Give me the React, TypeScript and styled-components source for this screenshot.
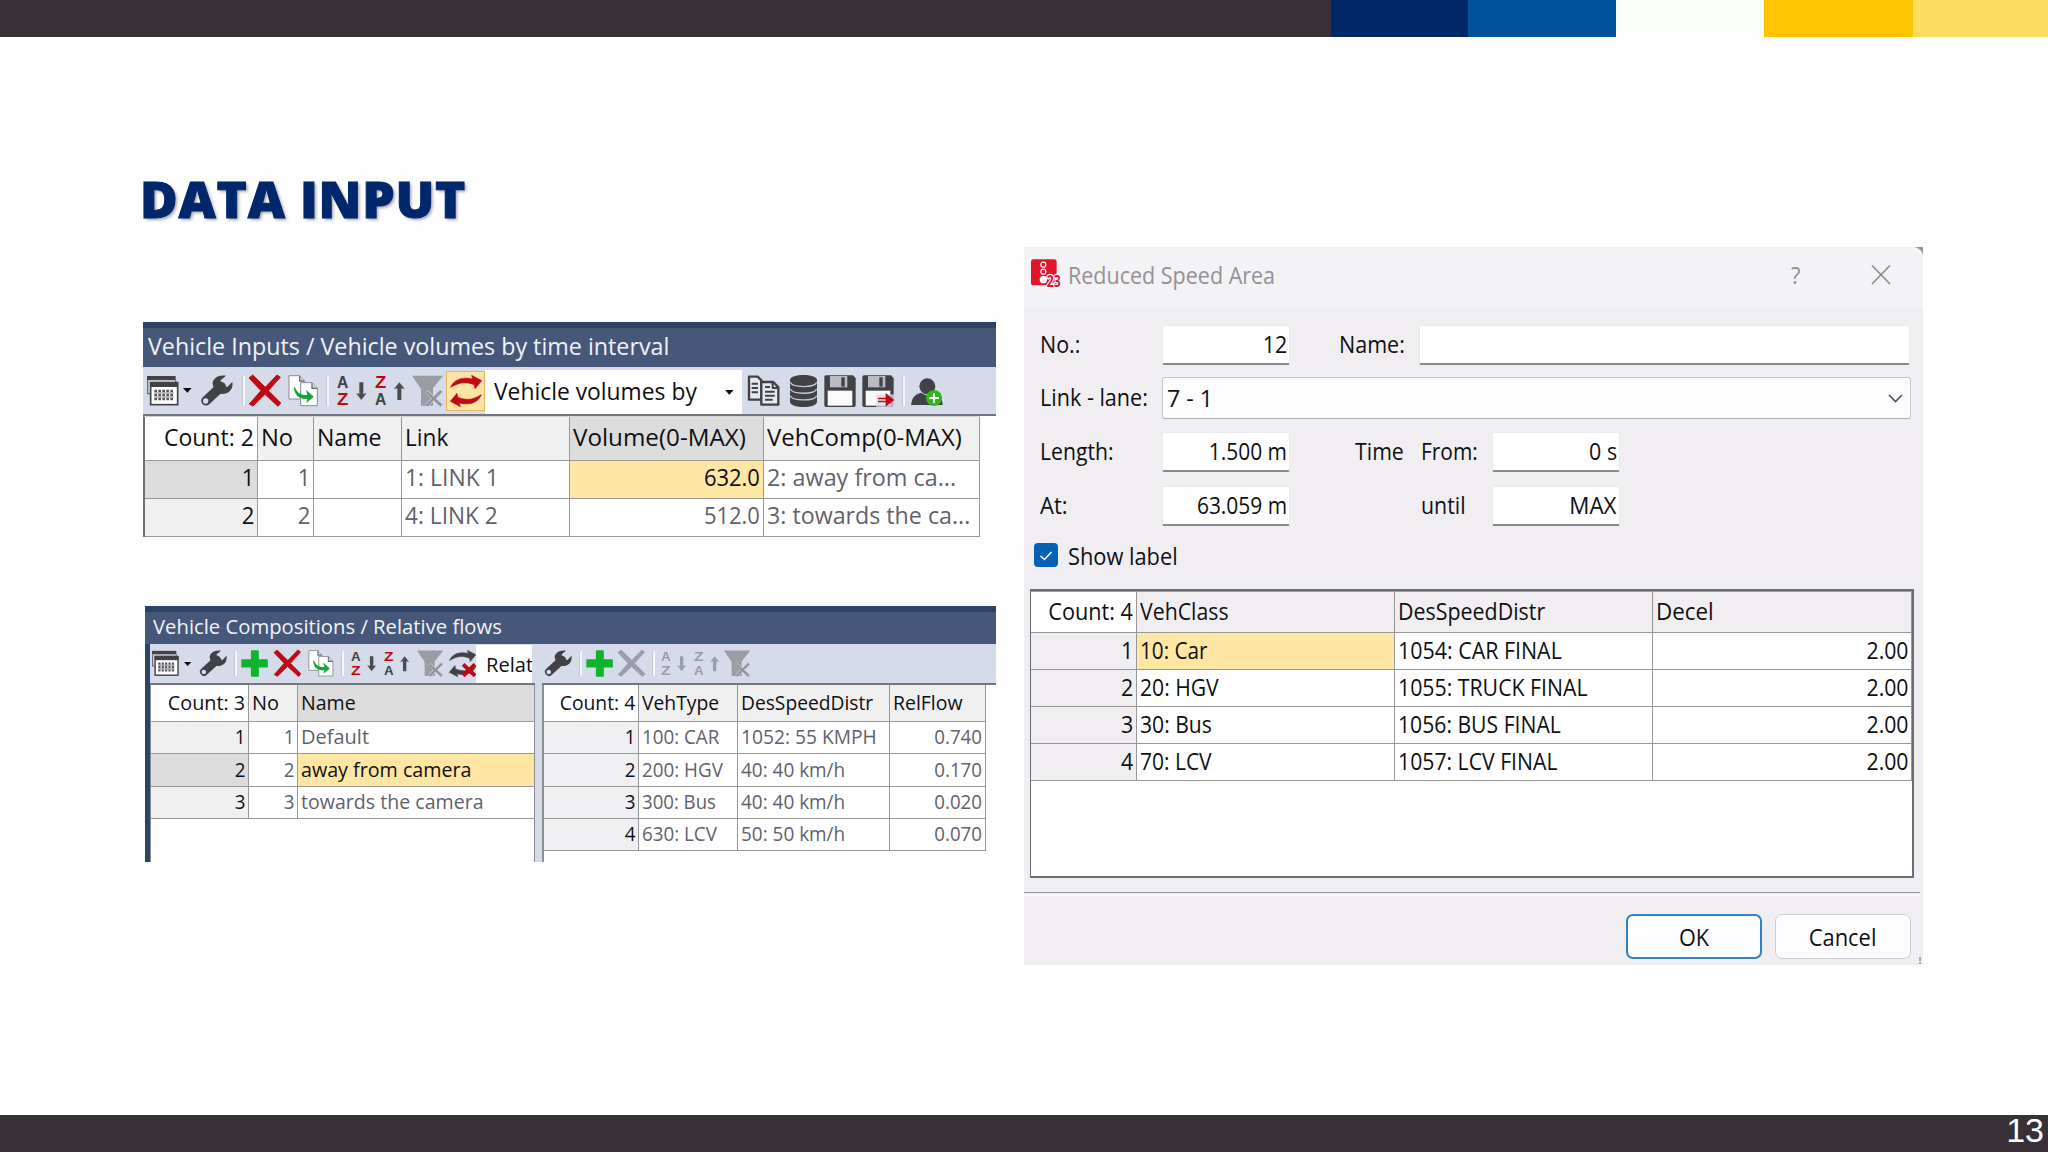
import React from "react";
import styled, { createGlobalStyle } from "styled-components";

const Global = createGlobalStyle`
  * { box-sizing: border-box; }
  body { margin: 0; background: #fefefe; font-family: "Open Sans", "Noto Sans", sans-serif; }
`;

/* ---------- slide frame ---------- */

const Slide = styled.div`
  width: 2048px;
  height: 1152px;
  display: flex;
  flex-direction: column;
  overflow: hidden;
  background: #fefefe;
`;

const TopBar = styled.header`
  display: flex;
  height: 37px;
  flex: none;
`;

const Stripe = styled.div<{ $w: number; $c: string }>`
  width: ${(p) => p.$w}px;
  background: ${(p) => p.$c};
`;

const Body = styled.main`
  display: flex;
  flex: 1;
  padding-left: 143px;
`;

const LeftColumn = styled.div`
  width: 853px;
  padding-top: 137px;
  display: flex;
  flex-direction: column;
`;

const Heading = styled.h1`
  margin: 0 0 98px -3px;
  height: 50px;
  font-size: 50px;
  line-height: 50px;
  font-weight: 800;
  letter-spacing: 0.8px;
  white-space: nowrap;
  color: #00276c;
  -webkit-text-stroke: 1px #00276c;
  text-shadow: 2px 2px 3px rgba(60, 60, 70, 0.45);
  transform: scaleX(1.026);
  transform-origin: left;
`;

const Footer = styled.footer`
  height: 37px;
  flex: none;
  display: flex;
  justify-content: flex-end;
  padding: 0 4px 0 0;
  background: linear-gradient(#353235, #3b2e38);
  color: #fff;
  font: 34px/30px "Liberation Sans", Arial, sans-serif;
`;

/* ---------- shared text and tables ---------- */

const Txt = styled.span<{ $k?: number; $end?: boolean; $mid?: boolean }>`
  display: inline-block;
  line-height: 1;
  white-space: nowrap;
  transform: scaleX(${(p) => p.$k ?? 1});
  transform-origin: ${(p) => (p.$end ? "right" : p.$mid ? "center" : "left")};
`;

const TableRow = styled.div<{ $cols: string; $h: number; $pb: number }>`
  display: grid;
  grid-template-columns: ${(p) => p.$cols};
  height: ${(p) => p.$h}px;
  & > div { padding-bottom: ${(p) => p.$pb}px; }
`;

const Cell = styled.div<{ $bg?: string; $c?: string; $end?: boolean; $open?: boolean }>`
  display: flex;
  align-items: center;
  justify-content: ${(p) => (p.$end ? "flex-end" : "flex-start")};
  overflow: hidden;
  padding: 0 3px;
  background: ${(p) => p.$bg ?? "#fff"};
  color: ${(p) => p.$c ?? "#101014"};
  border-right: ${(p) => (p.$open ? "0" : "1px solid #989898")};
  border-bottom: 1px solid #989898;
`;

type CellSpec = { t: string; k?: number; bg?: string; c?: string; end?: boolean; open?: boolean };

function Row({ cols, h, pb, cells }: { cols: string; h: number; pb: number; cells: CellSpec[] }) {
  return (
    <TableRow $cols={cols} $h={h} $pb={pb}>
      {cells.map((c, i) => (
        <Cell key={i} $bg={c.bg} $c={c.c} $end={c.end} $open={c.open}>
          <Txt $k={c.k} $end={c.end}>{c.t}</Txt>
        </Cell>
      ))}
    </TableRow>
  );
}

const HEAD = "#f0f0f0";
const SELHEAD = "#dcdcdc";
const YEL = "#ffe6a2";
const DIM = "#62626a";

/* ---------- toolbar ---------- */

const Toolbar = styled.div<{ $h: number }>`
  display: flex;
  align-items: center;
  height: ${(p) => p.$h}px;
  background: #d6dbe9;
  border-bottom: 2px solid #73767e;
`;

const Svg = styled.svg<{ $ml: number }>`
  flex: none;
  display: block;
  margin-left: ${(p) => p.$ml}px;
  overflow: visible;
`;

const Sep = styled.i<{ $ml: number; $h: number }>`
  flex: none;
  width: 2px;
  height: ${(p) => p.$h}px;
  margin-left: ${(p) => p.$ml}px;
  background: #f7f7fb;
  box-shadow: -1px 0 0 #c3c7d4;
`;

const Toggle = styled.div`
  flex: none;
  width: 39px;
  height: 40px;
  margin-left: 2px;
  display: flex;
  align-items: center;
  justify-content: center;
  background: #fde3a4;
  border: 1.5px solid #e6b85c;
`;

const Picker = styled.div<{ $w: number; $h: number; $pl: number; $fs: number }>`
  flex: none;
  display: flex;
  align-items: center;
  align-self: flex-end;
  overflow: hidden;
  width: ${(p) => p.$w}px;
  height: ${(p) => p.$h}px;
  padding-left: ${(p) => p.$pl}px;
  background: #fff;
  color: #101014;
  font-size: ${(p) => p.$fs}px;
`;

type IP = { s: number; ml?: number; tone?: string };
const DK = "#404246";
const RED = "#c00914";

const TableIcon = ({ s, ml = 0 }: IP) => (
  <Svg $ml={ml} width={s * 94} height={s * 96} viewBox="50 196 94 96">
    <rect x="50" y="199" width="86" height="13" fill={DK} />
    <path d="M52 212V252H60M136 212V218" stroke="#6b6d70" strokeWidth="4" fill="none" />
    <rect x="54" y="212" width="80" height="6" fill="#c9cbd0" />
    <rect x="61" y="219" width="81" height="66" fill="#fff" stroke={DK} strokeWidth="5" />
    <rect x="60" y="217" width="83" height="15" fill={DK} />
    <path d="M72 244H132M72 256H132M72 268H132" stroke="#55575b" strokeWidth="8" strokeDasharray="8 4" />
    <path d="M72 250H130M72 262H130" stroke="#8a8c90" strokeWidth="3" />
  </Svg>
);

const Caret = ({ s, ml = 0 }: IP) => (
  <Svg $ml={ml} width={s * 26} height={s * 14} viewBox="0 0 26 14">
    <path d="M0 0H26L13 14Z" fill="#0c0c10" />
  </Svg>
);

const Wrench = ({ s, ml = 0 }: IP) => (
  <Svg $ml={ml} width={s * 98} height={s * 96} viewBox="211 195 98 96">
    <path d="M229 272L274 230" stroke={DK} strokeWidth="29" strokeLinecap="round" />
    <path d="M250 226C244 210 262 193 289 197L273 211L277 228L294 230L308 215C312 238 297 252 276 252C262 252 254 242 250 226Z" fill={DK} />
    <circle cx="228" cy="273" r="8" fill="#d6dbe9" />
  </Svg>
);

const Cross = ({ s, ml = 0, tone = RED }: IP) => (
  <Svg $ml={ml} width={s * 96} height={s * 94} viewBox="357 196 96 94">
    <path d="M357 205L368 196L406 233L441 196L451 203L415 243L452 280L444 290L405 254L369 289L358 283L393 243Z" fill={tone} stroke={tone} strokeWidth="3" />
  </Svg>
);

const Plus = ({ s, ml = 0 }: IP) => (
  <Svg $ml={ml} width={s * 96} height={s * 96} viewBox="0 0 96 96">
    <path d="M35 3Q35 1 38 1H60Q63 1 63 4V33H92Q95 33 95 36V59Q95 62 92 62H63V92Q63 95 60 95H38Q35 95 35 92V62H4Q1 62 1 59V36Q1 33 4 33H35Z" fill="#0fb42c" />
  </Svg>
);

const CopyGo = ({ s, ml = 0 }: IP) => (
  <Svg $ml={ml} width={s * 92} height={s * 96} viewBox="476 196 92 96">
    <path d="M479 198H511L525 213V268H479Z" fill="#fff" stroke="#8a8c90" strokeWidth="3" />
    <path d="M511 198V214H525" fill="#d5d5d8" stroke="#6b6d70" strokeWidth="4" />
    <path d="M514 219H548L564 235V288H514Z" fill="#fff" stroke="#8a8c90" strokeWidth="3" />
    <path d="M548 219V236H564" fill="#d5d5d8" stroke="#6b6d70" strokeWidth="4" />
    <path d="M494 232C500 232 500 252 524 256L534 256L530 240L553 261L531 280L534 268C510 270 494 256 494 232Z" fill="#11a63c" />
  </Svg>
);

const SortIcon = ({ s, ml = 0, up, tone }: IP & { up?: boolean }) => {
  const a = tone ?? DK;
  const z = tone ?? RED;
  return (
    <Svg $ml={ml} width={s * 90} height={s * 96} viewBox="0 0 90 96" fontFamily="Liberation Sans" fontWeight={700} fontSize="48">
      <text x="0" y="39" textLength="34" lengthAdjust="spacingAndGlyphs" fill={up ? z : a}>{up ? "Z" : "A"}</text>
      <text x="0" y="90" textLength="34" lengthAdjust="spacingAndGlyphs" fill={up ? a : z}>{up ? "A" : "Z"}</text>
      <path
        d={up ? "M73 22L89 42L79 40V75H67V40L57 42Z" : "M73 75L89 54L79 57V22H67V57L57 54Z"}
        fill={tone ?? "#4a4c50"}
      />
    </Svg>
  );
};

const FilterOff = ({ s, ml = 0 }: IP) => (
  <Svg $ml={ml} width={s * 96} height={s * 96} viewBox="849 196 96 96">
    <path d="M849 198H942L912 236V288H876V238Z" fill="#9a9da5" />
    <path d="M893 246L937 288M937 243L893 288" stroke="#c3c7d2" strokeWidth="12" />
    <path d="M893 247L937 288M937 244L893 288" stroke="#8f929a" strokeWidth="7" />
  </Svg>
);

const SwapShape = "M964 232C974 207 1002 200 1030 207L1027 196L1057 212L1037 236L1035 224C1008 214 990 216 964 232Z";
const Swap = ({ s, ml = 0, tone = RED, off }: IP & { off?: boolean }) => (
  <Svg $ml={ml} width={s * 96} height={s * 96} viewBox="962 195 96 96">
    <path d={SwapShape} fill={tone} stroke={tone} strokeWidth="2" />
    <path d={SwapShape} fill={tone} stroke={tone} strokeWidth="2" transform="rotate(180 1010 243)" />
    {off && <path d="M1012 246L1054 286M1054 246L1012 286" stroke={RED} strokeWidth="14" />}
  </Svg>
);

const Docs = ({ s, ml = 0 }: IP) => (
  <Svg $ml={ml} width={s * 94} height={s * 96} viewBox="566 196 94 96" fill="#e6e8ef" stroke={DK} strokeWidth="7" strokeLinejoin="round">
    <path d="M569 201H595L606 212V270H569Z" />
    <path d="M577 222H596M577 235H596M577 248H596" strokeWidth="6" />
    <path d="M606 217H642L657 233V285H606Z" />
    <path d="M640 217V235H657M617 232H632M617 246H646M617 258H646M617 270H640" strokeWidth="6" fill="none" />
  </Svg>
);

const Database = ({ s, ml = 0 }: IP) => (
  <Svg $ml={ml} width={s * 82} height={s * 96} viewBox="690 195 82 96">
    <path d="M690 210C690 190 771 190 771 210V275C771 296 690 296 690 275Z" fill={DK} />
    <path d="M691 217C698 234 764 234 770 217M691 237C698 254 764 254 770 237M691 257C698 274 764 274 770 257" fill="none" stroke="#c6cad6" strokeWidth="4" />
  </Svg>
);

const Floppy = ({ s, ml = 0, arrow }: IP & { arrow?: boolean }) => (
  <Svg $ml={ml} width={s * 96} height={s * 96} viewBox="795 194 96 96">
    <path d="M801 195H882L890 204V284Q890 290 884 290H801Q796 290 796 284V200Q796 195 801 195Z" fill={DK} />
    <rect x="813" y="197" width="52" height="34" fill="#b9bcc4" />
    <path d="M852 201V229" stroke={DK} strokeWidth="10" />
    <rect x="806" y="241" width="74" height="45" fill="#fafafc" />
    {arrow && (
      <>
        <path d="M838 252H893V290H838Z" fill="#d6dbe9" opacity=".75" />
        <path d="M843 262H866V248L892 269L866 289V276H843V271H866V267H843Z" fill={RED} />
      </>
    )}
  </Svg>
);

const UserAdd = ({ s, ml = 0 }: IP) => (
  <Svg $ml={ml} width={s * 96} height={s * 96} viewBox="1054 196 96 96">
    <circle cx="1103" cy="230" r="24" fill={DK} />
    <path d="M1054 286Q1056 255 1084 249L1104 260L1124 249Q1148 258 1149 286Z" fill={DK} />
    <circle cx="1123" cy="265" r="24" fill="#2fb81e" />
    <path d="M1123 250V280M1108 265H1138" stroke="#fff" strokeWidth="6" />
  </Svg>
);

/* ---------- list panels ---------- */

const Panel = styled.section<{ $fs: number }>`
  font-size: ${(p) => p.$fs}px;
  background: #fff;
`;

const PanelTitle = styled.div<{ $h: number; $pl: number; $pb: number }>`
  height: ${(p) => p.$h}px;
  display: flex;
  align-items: center;
  padding: 0 0 ${(p) => p.$pb}px ${(p) => p.$pl}px;
  border-top: 6px solid #2d4363;
  background: #465879;
  color: #f1f3f8;
`;

const InputsTable = styled.div`
  width: 837px;
  border-left: 2px solid #6f7076;
  border-top: 1px solid #d4d4d6;
`;

const P1 = "113px 56px 88px 168px 194px 216px";
const S1 = 1 / 3;

function InputsPanel() {
  return (
    <Panel $fs={23.5}>
      <PanelTitle $h={45} $pl={5} $pb={1}>
        <Txt $k={0.99}>Vehicle Inputs / Vehicle volumes by time interval</Txt>
      </PanelTitle>
      <Toolbar $h={49}>
        <TableIcon s={S1} ml={4} />
        <Caret s={S1} ml={5} />
        <Wrench s={S1} ml={8} />
        <Sep $ml={10} $h={30} />
        <Cross s={S1} ml={4} />
        <CopyGo s={S1} ml={7} />
        <Sep $ml={9} $h={30} />
        <SortIcon s={S1} ml={8} />
        <SortIcon s={S1} ml={8} up />
        <FilterOff s={S1} ml={7} />
        <Toggle><Swap s={S1} /></Toggle>
        <Picker $w={257} $h={44} $pl={9} $fs={23.5}>
          <Txt $k={0.972}>Vehicle volumes by</Txt>
          <Caret s={S1} ml={22} />
        </Picker>
        <Docs s={S1} ml={6} />
        <Database s={S1} ml={10} />
        <Floppy s={S1} ml={7} />
        <Floppy s={S1} ml={6} arrow />
        <Sep $ml={9} $h={30} />
        <UserAdd s={S1} ml={6} />
      </Toolbar>
      <InputsTable>
        <Row cols={P1} h={44} pb={1} cells={[
          { t: "Count: 2", k: 0.979, end: true },
          { t: "No", k: 1.01, bg: HEAD },
          { t: "Name", k: 0.98, bg: HEAD },
          { t: "Link", k: 0.965, bg: HEAD },
          { t: "Volume(0-MAX)", k: 1.03, bg: SELHEAD },
          { t: "VehComp(0-MAX)", k: 1.02, bg: HEAD },
        ]} />
        <Row cols={P1} h={38} pb={3} cells={[
          { t: "1", k: 0.94, end: true, bg: "#dddcdd" },
          { t: "1", k: 0.94, end: true, c: DIM },
          { t: "" },
          { t: "1: LINK 1", k: 0.975, c: DIM },
          { t: "632.0", k: 0.935, end: true, bg: YEL },
          { t: "2: away from ca...", k: 0.994, c: DIM },
        ]} />
        <Row cols={P1} h={38} pb={3} cells={[
          { t: "2", k: 0.94, end: true, bg: HEAD },
          { t: "2", k: 0.94, end: true, c: DIM },
          { t: "" },
          { t: "4: LINK 2", k: 0.965, c: DIM },
          { t: "512.0", k: 0.935, end: true, c: DIM },
          { t: "3: towards the ca...", k: 0.988, c: DIM },
        ]} />
      </InputsTable>
    </Panel>
  );
}

const CompositionsFrame = styled.div`
  margin: 69px 0 0 2px;
`;

const Split = styled.div`
  display: flex;
  height: 218px;
  border-left: 5px solid #2f4364;
`;

const LeftPane = styled.div`
  width: 385px;
  flex: none;
`;

const Divider = styled.div`
  width: 7px;
  flex: none;
  background: #d6dbe9;
`;

const RightPane = styled.div`
  flex: 1;
`;

const PaneBody = styled.div<{ $l: string; $r: string; $h: number }>`
  height: ${(p) => p.$h}px;
  border-left: ${(p) => p.$l};
  border-right: ${(p) => p.$r};
`;

const PA = "98px 49px 236px";
const PB = "95px 99px 152px 96px";
const S2 = 0.283;
const GREY = "#9b9ea8";

function CompositionsPanel() {
  const left: [string, string, number, boolean][] = [
    ["1", "Default", 1.0, false],
    ["2", "away from camera", 0.984, true],
    ["3", "towards the camera", 0.979, false],
  ];
  const right: [string, string, number, string, number, string][] = [
    ["1", "100: CAR", 0.939, "1052: 55 KMPH", 0.96, "0.740"],
    ["2", "200: HGV", 0.941, "40: 40 km/h", 0.947, "0.170"],
    ["3", "300: Bus", 0.93, "40: 40 km/h", 0.947, "0.020"],
    ["4", "630: LCV", 0.939, "50: 50 km/h", 0.947, "0.070"],
  ];
  return (
    <CompositionsFrame>
      <Panel $fs={20}>
        <PanelTitle $h={38} $pl={8} $pb={3}>
          <Txt $k={1.013}>Vehicle Compositions / Relative flows</Txt>
        </PanelTitle>
        <Split>
          <LeftPane>
            <Toolbar $h={41}>
              <TableIcon s={S2} ml={2} />
              <Caret s={S2} ml={5} />
              <Wrench s={S2} ml={8} />
              <Sep $ml={8} $h={25} />
              <Plus s={S2} ml={4} />
              <Cross s={S2} ml={6} />
              <CopyGo s={S2} ml={7} />
              <Sep $ml={8} $h={25} />
              <SortIcon s={S2} ml={7} />
              <SortIcon s={S2} ml={8} up />
              <FilterOff s={S2} ml={7} />
              <Swap s={S2} ml={5} tone={DK} off />
              <Picker $w={56} $h={38} $pl={10} $fs={20.5}>
                <Txt $k={0.98}>Relat</Txt>
              </Picker>
            </Toolbar>
            <PaneBody $l="1px solid #8c8e94" $r="1px solid #8c8e94" $h={177}>
              <Row cols={PA} h={37} pb={1} cells={[
                { t: "Count: 3", k: 0.99, end: true },
                { t: "No", k: 0.998, bg: HEAD },
                { t: "Name", k: 0.978, bg: SELHEAD, open: true },
              ]} />
              {left.map(([n, t, k, sel], i) => (
                <Row key={n} cols={PA} h={i === 1 ? 33 : 32} pb={1} cells={[
                  { t: n, k: 0.94, end: true, bg: sel ? SELHEAD : HEAD },
                  { t: n, k: 0.94, end: true, c: DIM },
                  { t, k, c: sel ? undefined : DIM, bg: sel ? YEL : undefined, open: true },
                ]} />
              ))}
            </PaneBody>
          </LeftPane>
          <Divider />
          <RightPane>
            <Toolbar $h={41}>
              <Wrench s={S2} ml={2} />
              <Sep $ml={8} $h={25} />
              <Plus s={S2} ml={4} />
              <Cross s={S2} ml={5} tone={GREY} />
              <Sep $ml={8} $h={25} />
              <SortIcon s={S2} ml={6} tone={GREY} />
              <SortIcon s={S2} ml={7} up tone={GREY} />
              <FilterOff s={S2} ml={5} />
            </Toolbar>
            <PaneBody $l="2px solid #8c8e94" $r="0" $h={177}>
              <Row cols={PB} h={37} pb={1} cells={[
                { t: "Count: 4", k: 0.965, end: true },
                { t: "VehType", k: 0.966, bg: HEAD },
                { t: "DesSpeedDistr", k: 0.96, bg: HEAD },
                { t: "RelFlow", k: 0.971, bg: HEAD },
              ]} />
              {right.map(([n, a, ka, b, kb, v], i) => (
                <Row key={n} cols={PB} h={i === 1 ? 33 : 32} pb={1} cells={[
                  { t: n, k: 0.94, end: true, bg: "#f0eff1" },
                  { t: a, k: ka, c: DIM },
                  { t: b, k: kb, c: DIM },
                  { t: v, k: 0.935, c: DIM, end: true },
                ]} />
              ))}
            </PaneBody>
          </RightPane>
        </Split>
      </Panel>
    </CompositionsFrame>
  );
}

/* ---------- dialog ---------- */

const DialogBack = styled.div`
  width: 899px;
  height: 718px;
  margin: 210px 0 0 28px;
  background: linear-gradient(#97978c 0 14px, #f0eef1 14px);
`;

const Dialog = styled.section`
  height: 718px;
  display: flex;
  flex-direction: column;
  border-top-right-radius: 10px;
  background: #f0eef1;
  color: #101014;
  font-size: 23px;
`;

const DialogTitle = styled.div`
  height: 60px;
  flex: none;
  display: flex;
  align-items: flex-start;
  padding: 12px 32px 0 7px;
  background: #f3f2f4;
  border-top-right-radius: 10px;
  color: #939197;
`;

const TitleText = styled.div`
  display: flex;
  padding: 5px 0 0 6px;
`;

const CloseIcon = styled.svg`
  flex: none;
  width: 20px;
  height: 20px;
  margin: 6px 0 0 70px;
`;

const Spacer = styled.div`
  flex: 1;
`;

const Form = styled.div`
  padding: 18px 13px 0 16px;
`;

const FormRow = styled.div<{ $h: number; $gap: number }>`
  display: flex;
  align-items: center;
  height: ${(p) => p.$h}px;
  margin-bottom: ${(p) => p.$gap}px;
`;

const Label = styled.div<{ $w: number; $ml?: number }>`
  flex: none;
  width: ${(p) => p.$w}px;
  margin-left: ${(p) => p.$ml ?? 0}px;
  padding-bottom: 1px;
  display: flex;
`;

const Field = styled.div<{ $w?: number }>`
  ${(p) => (p.$w ? `width: ${p.$w}px; flex: none;` : "flex: 1;")}
  height: 40px;
  display: flex;
  align-items: center;
  justify-content: flex-end;
  padding: 0 2px 0 0;
  background: #fefefe;
  border: 1px solid #eae9ec;
  border-bottom: 2px solid #8b898e;
  border-radius: 2px;
`;

const Combo = styled.div`
  flex: 1;
  height: 42px;
  margin-right: -1px;
  display: flex;
  align-items: center;
  justify-content: space-between;
  padding: 1px 7px 0 4px;
  background: #fdfcfe;
  border: 1px solid #c6c5c8;
  border-bottom-color: #aeadb0;
  border-radius: 3px;
`;

const CheckBox = styled.div`
  width: 24px;
  height: 24px;
  margin: 0 10px 0 -6px;
  border-radius: 4px;
  background: #0560b6;
`;

const CheckText = styled.div`
  display: flex;
  padding: 2px 0 0 0;
`;

const Grid = styled.div`
  width: 884px;
  height: 289px;
  margin: 22px 0 0 6px;
  background: #fefefe;
  border: 1px solid #6b6d72;
  border-top-width: 2px;
  border-bottom-width: 2px;
  border-right-width: 2px;
  box-shadow: inset 0 1px 0 #9d9ea2;
  padding-top: 1px;
`;

const Rule = styled.div`
  height: 4px;
  margin: 14px 3px 0 0;
  border-top: 1px solid #98979b;
  border-bottom: 2px solid #fafafb;
`;

const Actions = styled.div`
  display: flex;
  justify-content: flex-end;
  gap: 13px;
  padding: 18px 12px 0 0;
`;

const Button = styled.button<{ $primary?: boolean }>`
  width: 136px;
  height: 45px;
  padding: 0;
  border: ${(p) => (p.$primary ? "2px solid #2f82c8" : "1.5px solid #cfced2")};
  border-radius: 7px;
  background: #fdfcfe;
  color: #101014;
  font: 23px "Open Sans", sans-serif;
`;

const Grip = styled.i`
  align-self: flex-end;
  width: 2px;
  height: 7px;
  margin: -2px 2px 0 0;
  border-top: 4px solid #a9a8ac;
  border-bottom: 2px solid #a9a8ac;
  box-shadow: -6px 5px 0 -1px #a9a8ac;
`;

const AppIcon = () => (
  <Svg $ml={0} width={31} height={30} viewBox="63 72 93 90">
    <rect x="63" y="73" width="77" height="78" rx="8" fill="#e0142b" />
    <circle cx="100" cy="89" r="7.5" fill="none" stroke="#fff" strokeWidth="3.5" />
    <circle cx="100" cy="110" r="7.5" fill="none" stroke="#fff" strokeWidth="3.5" />
    <circle cx="100" cy="134" r="11" fill="#fff" />
    <text x="110" y="157" fontFamily="Open Sans" fontWeight="700" fontSize="46" textLength="42" lengthAdjust="spacingAndGlyphs" fill="#e0142b" stroke="#fff" strokeWidth="7" paintOrder="stroke">23</text>
  </Svg>
);

const P3 = "106px 258px 258px 259px";

function SpeedDialog() {
  const rows: [string, string, number, string, number][] = [
    ["1", "10: Car", 0.9, "1054: CAR FINAL", 0.931],
    ["2", "20: HGV", 0.918, "1055: TRUCK FINAL", 0.925],
    ["3", "30: Bus", 0.918, "1056: BUS FINAL", 0.92],
    ["4", "70: LCV", 0.912, "1057: LCV FINAL", 0.922],
  ];
  return (
    <DialogBack>
      <Dialog>
        <DialogTitle>
          <AppIcon />
          <TitleText><Txt $k={0.935}>Reduced Speed Area</Txt></TitleText>
          <Spacer />
          <TitleText><Txt $k={0.95}>?</Txt></TitleText>
          <CloseIcon viewBox="0 0 20 20">
            <path d="M1 0.5L19 19M19 0.5L1 19" stroke="#8d8b91" strokeWidth="1.6" />
          </CloseIcon>
        </DialogTitle>
        <Form>
          <FormRow $h={40} $gap={12}>
            <Label $w={122}><Txt $k={0.933}>No.:</Txt></Label>
            <Field $w={128}><Txt $k={0.929} $end>12</Txt></Field>
            <Label $w={80} $ml={49}><Txt $k={0.936}>Name:</Txt></Label>
            <Field />
          </FormRow>
          <FormRow $h={42} $gap={13}>
            <Label $w={122}><Txt $k={0.938}>Link - lane:</Txt></Label>
            <Combo>
              <Txt $k={1.01}>7 - 1</Txt>
              <Svg $ml={0} width={15} height={9} viewBox="0 0 15 9">
                <path d="M1 1L7.5 7.5L14 1" fill="none" stroke="#55545a" strokeWidth="1.7" />
              </Svg>
            </Combo>
          </FormRow>
          <FormRow $h={40} $gap={14}>
            <Label $w={122}><Txt $k={0.92}>Length:</Txt></Label>
            <Field $w={128}><Txt $k={0.91} $end>1.500 m</Txt></Field>
            <Label $w={66} $ml={65}><Txt $k={0.927}>Time</Txt></Label>
            <Label $w={71}><Txt $k={0.909}>From:</Txt></Label>
            <Field $w={128}><Txt $k={0.93} $end>0 s</Txt></Field>
          </FormRow>
          <FormRow $h={40} $gap={17}>
            <Label $w={122}><Txt $k={0.955}>At:</Txt></Label>
            <Field $w={128}><Txt $k={0.91} $end>63.059 m</Txt></Field>
            <Label $w={71} $ml={131}><Txt $k={0.929}>until</Txt></Label>
            <Field $w={128}><Txt $k={0.975} $end>MAX</Txt></Field>
          </FormRow>
          <FormRow $h={24} $gap={0}>
            <CheckBox>
              <Svg $ml={0} width={24} height={24} viewBox="0 0 24 24">
                <path d="M6.5 13L10.5 16.5L17.5 9" fill="none" stroke="#fff" strokeWidth="1.6" />
              </Svg>
            </CheckBox>
            <CheckText><Txt $k={0.948}>Show label</Txt></CheckText>
          </FormRow>
        </Form>
        <Grid>
          <Row cols={P3} h={41} pb={2} cells={[
            { t: "Count: 4", k: 0.941, end: true },
            { t: "VehClass", k: 0.925, bg: "#f0eef1" },
            { t: "DesSpeedDistr", k: 0.93, bg: "#f0eef1" },
            { t: "Decel", k: 0.972, bg: "#f0eef1" },
          ]} />
          {rows.map(([n, a, ka, b, kb]) => (
            <Row key={n} cols={P3} h={37} pb={2} cells={[
              { t: n, k: 0.93, end: true, bg: "#f0eef1" },
              { t: a, k: ka, bg: n === "1" ? YEL : undefined },
              { t: b, k: kb },
              { t: "2.00", k: 0.923, end: true },
            ]} />
          ))}
        </Grid>
        <Rule />
        <Actions>
          <Button $primary><Txt $k={0.941} $mid>OK</Txt></Button>
          <Button><Txt $k={0.952} $mid>Cancel</Txt></Button>
        </Actions>
        <Grip />
      </Dialog>
    </DialogBack>
  );
}

export default function App() {
  return (
    <Slide>
      <Global />
      <TopBar>
        <Stripe $w={1331} $c="#382f37" />
        <Stripe $w={137} $c="#002868" />
        <Stripe $w={148} $c="#00539c" />
        <Stripe $w={148} $c="#fdfffd" />
        <Stripe $w={149} $c="#ffc502" />
        <Stripe $w={135} $c="#fedc5e" />
      </TopBar>
      <Body>
        <LeftColumn>
          <Heading>DATA INPUT</Heading>
          <InputsPanel />
          <CompositionsPanel />
        </LeftColumn>
        <SpeedDialog />
      </Body>
      <Footer>13</Footer>
    </Slide>
  );
}
